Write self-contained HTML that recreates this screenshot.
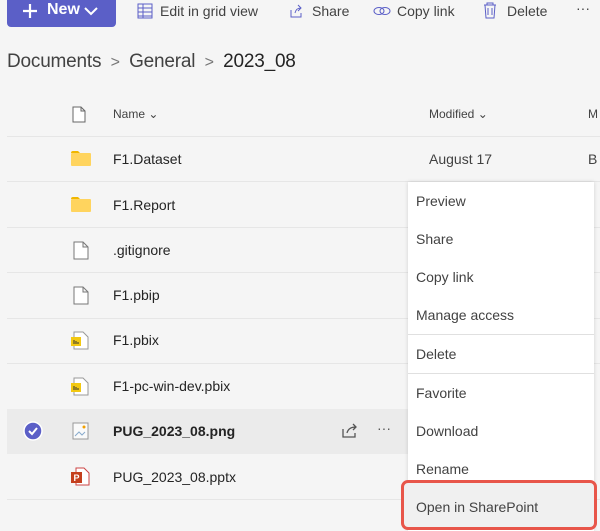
<!DOCTYPE html>
<html style="width:600px;height:531px;overflow:hidden"><head><style>
*{margin:0;padding:0;box-sizing:border-box}
body{width:600px;height:531px;overflow:hidden;background:#f5f5f5;font-family:"Liberation Sans",sans-serif;color:#242424;position:relative}
.a{position:absolute;white-space:nowrap}
.tb{font-size:14px;color:#424242;top:3px}
.row{position:absolute;left:7px;width:600px;height:1px;background:#e6e6e6}
.nm{position:absolute;left:113px;font-size:14px;color:#242424}
.mi{position:absolute;left:416px;font-size:14px;color:#424242}
</style></head><body>
<div class="a" style="left:7px;top:-6px;width:109px;height:33px;background:#5b5fc7;border-radius:4px"></div>
<svg class="a" style="left:22px;top:3px" width="16" height="16"><path d="M8 1V15M1 8H15" stroke="#fff" stroke-width="2.2"/></svg>
<div class="a" style="left:47px;top:1px;color:#fff;font-size:16px;font-weight:bold">New</div>
<svg class="a" style="left:84px;top:6px" width="14" height="10"><path d="M1 2L7 8L13 2" fill="none" stroke="#fff" stroke-width="2"/></svg>
<svg class="a" style="left:137px;top:3px" width="16" height="16"><rect x="1" y="1" width="14" height="14" fill="none" stroke="#5b5fc7"/><path d="M1 5H15M1 9H15M1 13H15M6 1V15" stroke="#5b5fc7"/></svg>
<div class="a tb" style="left:160px">Edit in grid view</div>
<svg class="a" style="left:288px;top:3px" width="16" height="16"><path d="M3 7V14H13V10M7 10C8 6 10 5 13 5M10 2L13 5L10 8" fill="none" stroke="#5b5fc7"/></svg>
<div class="a tb" style="left:312px">Share</div>
<svg class="a" style="left:373px;top:4px" width="18" height="14"><ellipse cx="6" cy="7" rx="5" ry="3.5" fill="none" stroke="#5b5fc7"/><ellipse cx="12" cy="7" rx="5" ry="3.5" fill="none" stroke="#5b5fc7"/></svg>
<div class="a tb" style="left:397px">Copy link</div>
<svg class="a" style="left:483px;top:2px" width="14" height="17"><path d="M1 3H13M4 3V1H10V3M2 3L3 16H11L12 3M5 6V13M9 6V13" fill="none" stroke="#5b5fc7"/></svg>
<div class="a tb" style="left:507px">Delete</div>
<div class="a tb" style="left:576px;top:0">···</div>
<div class="a" style="left:7px;top:51px;font-size:19px;color:#424242;letter-spacing:-0.2px">Documents <span style="color:#777;font-size:16px">&nbsp;&gt;&nbsp;</span> General <span style="color:#777;font-size:16px">&nbsp;&gt;&nbsp;</span> <span style="color:#242424">2023_08</span></div>
<svg class="a" style="left:72px;top:106px" width="14" height="17"><path d="M1 1H9L13 5V16H1Z M9 1V5H13" fill="#fff" stroke="#666"/></svg>
<div class="a" style="left:113px;top:107px;font-size:12px;color:#424242">Name &#8964;</div>
<div class="a" style="left:429px;top:107px;font-size:12px;color:#424242">Modified &#8964;</div>
<div class="a" style="left:588px;top:107px;font-size:12px;color:#424242">M</div>
<div class="row" style="top:136px"></div>
<div class="row" style="top:181px"></div>
<div class="row" style="top:227px"></div>
<div class="row" style="top:272px"></div>
<div class="row" style="top:318px"></div>
<div class="row" style="top:363px"></div>
<div class="a" style="left:7px;top:409px;width:401px;height:45px;background:#ebebeb"></div>
<div class="row" style="top:499px"></div>
<svg class="a" style="left:71px;top:151px" width="20" height="15"><path d="M0 2Q0 0 2 0H7L9 2H0Z" fill="#f1b700"/><rect y="2" width="20" height="13" rx="1" fill="#ffd45e"/></svg>
<svg class="a" style="left:71px;top:197px" width="20" height="15"><path d="M0 2Q0 0 2 0H7L9 2H0Z" fill="#f1b700"/><rect y="2" width="20" height="13" rx="1" fill="#ffd45e"/></svg>
<svg class="a" style="left:73px;top:241px" width="16" height="19"><path d="M1 1H10L15 6V18H1Z M10 1V6H15" fill="#fff" stroke="#777"/></svg>
<svg class="a" style="left:73px;top:286px" width="16" height="19"><path d="M1 1H10L15 6V18H1Z M10 1V6H15" fill="#fff" stroke="#777"/></svg>
<svg class="a" style="left:71px;top:331px" width="18" height="19"><path d="M3 1H12L17 6V18H3Z" fill="#fff" stroke="#999"/><rect x="0" y="6" width="10" height="9" fill="#f2c811"/><path d="M3 13V9M5 13V10M7 13V11" stroke="#333"/></svg>
<svg class="a" style="left:71px;top:377px" width="18" height="19"><path d="M3 1H12L17 6V18H3Z" fill="#fff" stroke="#999"/><rect x="0" y="6" width="10" height="9" fill="#f2c811"/><path d="M3 13V9M5 13V10M7 13V11" stroke="#333"/></svg>
<svg class="a" style="left:72px;top:422px" width="17" height="18"><rect x="1" y="1" width="15" height="16" fill="#fafafa" stroke="#999"/><path d="M3 14L7 10L10 13L13 10" fill="none" stroke="#8ac"/><circle cx="12" cy="5" r="1.5" fill="#f2a000"/></svg>
<svg class="a" style="left:71px;top:467px" width="19" height="19"><path d="M5 1H13L18 6V18H5Z" fill="#fff" stroke="#c44"/><rect x="0" y="5" width="11" height="11" fill="#c43e1c"/><text x="2.5" y="14" font-size="9" fill="#fff" font-family="Liberation Sans" font-weight="bold">P</text></svg>
<svg class="a" style="left:23px;top:421px" width="20" height="20"><circle cx="10" cy="10" r="9" fill="#5b5fc7" stroke="#fff" stroke-width="1.5"/><path d="M6 10L9 13L14 7" fill="none" stroke="#fff" stroke-width="2"/></svg>
<div class="nm" style="top:151px">F1.Dataset</div>
<div class="nm" style="top:197px">F1.Report</div>
<div class="nm" style="top:242px">.gitignore</div>
<div class="nm" style="top:287px">F1.pbip</div>
<div class="nm" style="top:332px">F1.pbix</div>
<div class="nm" style="top:378px">F1-pc-win-dev.pbix</div>
<div class="nm" style="top:423px;font-weight:bold">PUG_2023_08.png</div>
<div class="nm" style="top:469px">PUG_2023_08.pptx</div>
<svg class="a" style="left:341px;top:422px" width="18" height="17"><path d="M2 7V15H14V11M6 11C7 7 10 5 15 5M12 2L15 5L12 8" fill="none" stroke="#555" stroke-width="1.3"/></svg>
<div class="a" style="left:377px;top:420px;font-size:14px;color:#555">···</div>
<div class="a" style="left:429px;top:151px;font-size:14px;color:#424242">August 17</div>
<div class="a" style="left:588px;top:151px;font-size:14px;color:#424242">B</div>
<div class="a" style="left:408px;top:182px;width:186px;height:349px;background:#fff;box-shadow:0 0 4px rgba(0,0,0,.15)"></div>
<div class="a" style="left:408px;top:334px;width:186px;height:1px;background:#e0e0e0"></div>
<div class="a" style="left:408px;top:373px;width:186px;height:1px;background:#e0e0e0"></div>
<div class="mi" style="top:193px">Preview</div>
<div class="mi" style="top:231px">Share</div>
<div class="mi" style="top:269px">Copy link</div>
<div class="mi" style="top:307px">Manage access</div>
<div class="mi" style="top:346px">Delete</div>
<div class="mi" style="top:385px">Favorite</div>
<div class="mi" style="top:423px">Download</div>
<div class="mi" style="top:461px">Rename</div>
<div class="a" style="left:401px;top:480px;width:196px;height:50px;border:3px solid #e8564a;border-radius:7px;background:#f0f0f0"></div>
<div class="mi" style="top:499px">Open in SharePoint</div>
</body></html>
